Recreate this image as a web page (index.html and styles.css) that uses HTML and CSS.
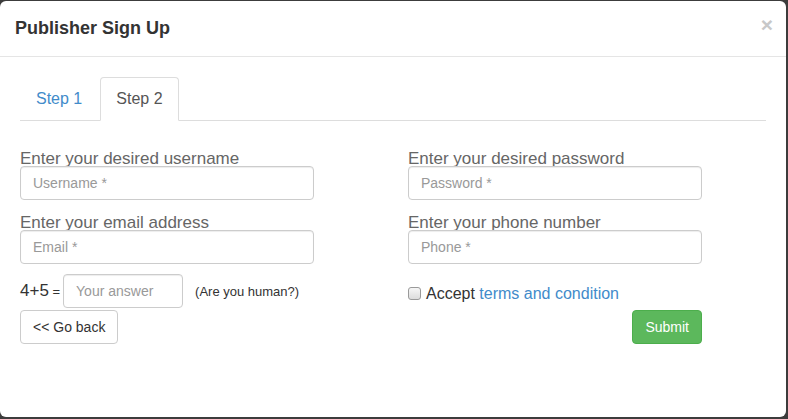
FILE: index.html
```html
<!DOCTYPE html>
<html>
<head>
<meta charset="utf-8">
<link rel="stylesheet" href="styles.css">
</head>
<body>
<div class="modal">
  <div class="modal-header">
    <h4 class="modal-title">Publisher Sign Up</h4>
    <span class="close">&times;</span>
  </div>
  <div class="modal-body">
    <ul class="tabs">
      <li><a class="tab">Step 1</a></li>
      <li><a class="tab active">Step 2</a></li>
    </ul>
    <form class="form-grid">
      <div class="group row-a">
        <label class="field-label">Enter your desired username</label>
        <input class="control" type="text" placeholder="Username *">
      </div>
      <div class="group row-a">
        <label class="field-label">Enter your desired password</label>
        <input class="control" type="password" placeholder="Password *">
      </div>
      <div class="group row-b">
        <label class="field-label">Enter your email address</label>
        <input class="control" type="text" placeholder="Email *">
      </div>
      <div class="group row-b">
        <label class="field-label">Enter your phone number</label>
        <input class="control" type="text" placeholder="Phone *">
      </div>
      <div class="captcha row-c">
        <span class="sum">4+5</span><span class="eq">&nbsp;=</span>
        <input class="control answer" type="text" placeholder="Your answer">
        <span class="human">(Are you human?)</span>
      </div>
      <div class="accept row-c">
        <input class="check" type="checkbox">
        <span class="accept-text">Accept <a class="link">terms and condition</a></span>
      </div>
      <div class="row-d">
        <button type="button" class="btn btn-default">&lt;&lt; Go back</button>
      </div>
      <div class="row-d submit-wrap">
        <button type="button" class="btn btn-success">Submit</button>
      </div>
    </form>
  </div>
</div>
</body>
</html>
```
FILE: styles.css
```css
* { box-sizing: border-box; }
html, body { margin: 0; padding: 0; }
body {
  background: #3c3c3c;
  font-family: "Liberation Sans", Arial, sans-serif;
  color: #333;
  width: 788px;
  height: 419px;
  overflow: hidden;
}
.modal {
  margin: 1px 2px 2px 0;
  height: 416px;
  background: #fff;
  border-radius: 6px;
}
.modal-header {
  display: flex;
  justify-content: space-between;
  align-items: flex-start;
  padding: 15px;
  border-bottom: 1px solid #e5e5e5;
}
.modal-title {
  margin: 0;
  font-size: 18px;
  font-weight: bold;
  line-height: 25px;
  color: #333;
}
.close {
  font-size: 21px;
  font-weight: bold;
  line-height: 1;
  color: #c8c8c8;
  margin-top: -2px;
  margin-right: -2px;
}
.modal-body {
  padding: 20px;
}
.tabs {
  display: flex;
  list-style: none;
  margin: 0;
  padding: 0;
  border-bottom: 1px solid #ddd;
}
.tabs li { margin-bottom: -1px; }
.tab {
  display: block;
  padding: 10px 15px;
  margin-right: 2px;
  font-size: 16px;
  line-height: 22px;
  color: #428bca;
  border: 1px solid transparent;
  border-radius: 4px 4px 0 0;
}
.tab.active {
  color: #555;
  background: #fff;
  border-color: #ddd;
  border-bottom-color: transparent;
}
.form-grid {
  display: grid;
  grid-template-columns: 388px 1fr;
  margin-top: 27px;
}
.group { display: flex; flex-direction: column; }
.field-label {
  padding-top: 4px;
  font-size: 17px;
  line-height: 14px;
  color: #666;
}
.control {
  width: 294px;
  height: 34px;
  padding: 6px 12px;
  font-family: "Liberation Sans", Arial, sans-serif;
  font-size: 14px;
  color: #555;
  border: 1px solid #ccc;
  border-radius: 4px;
  box-shadow: inset 0 1px 1px rgba(0,0,0,.075);
  outline: none;
}
.control::placeholder { color: #999; }
.row-b { margin-top: 12px; }
.row-c { margin-top: 10px; height: 34px; }
.row-d { margin-top: 2px; }
.captcha { display: flex; align-items: center; }
.sum { font-size: 17px; color: #333; }
.eq { font-size: 13px; color: #333; margin-right: 3px; }
.control.answer { width: 120px; }
.human { font-size: 13px; color: #333; margin-left: 12px; }
.accept { display: flex; align-items: center; padding-top: 5px; }
.check {
  appearance: none;
  -webkit-appearance: none;
  width: 13px;
  height: 13px;
  margin: 0 5px 0 0;
  border: 1px solid #9a9a9a;
  border-radius: 3px;
  background: linear-gradient(#f6f6f6, #dcdcdc);
}
.accept-text { font-size: 16px; color: #333; line-height: 20px; }
.link { color: #428bca; }
.btn {
  height: 34px;
  padding: 6px 12px;
  font-family: "Liberation Sans", Arial, sans-serif;
  font-size: 14px;
  line-height: 20px;
  border: 1px solid;
  border-radius: 4px;
}
.btn-default { background: #fff; color: #333; border-color: #ccc; }
.btn-success { background: #5cb85c; color: #fff; border-color: #4cae4c; }
.submit-wrap { width: 294px; display: flex; justify-content: flex-end; }
```
